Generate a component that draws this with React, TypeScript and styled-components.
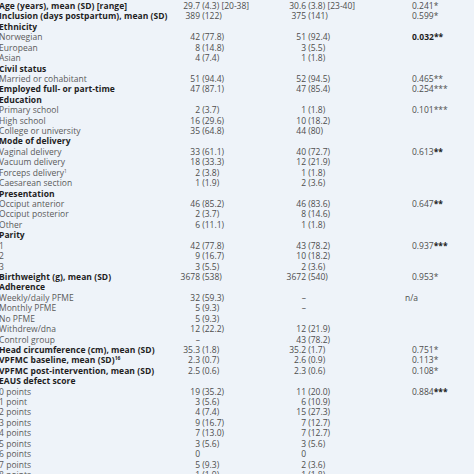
import React from "react";
import styled, { createGlobalStyle } from "styled-components";

const Global = createGlobalStyle`
  html, body { margin: 0; padding: 0; background: #eef3f9; }
  body { font-family: "Open Sans", "Noto Sans", sans-serif; }
`;

const Table = styled.div`
  display: flex;
  flex-direction: column;
  padding-top: 1px;
  width: 474px;
  height: 474px;
  overflow: hidden;
  background: #eef3f9;
  color: #4d4d4d;
  font-size: 8.5px;
`;

const Row = styled.div`
  display: grid;
  grid-template-columns: 176px 106px 130px 1fr;
  height: 10.43px;
  line-height: 10.43px;
  white-space: nowrap;
`;

const Label = styled.div<{ $bold?: boolean }>`
  font-weight: ${(p) => (p.$bold ? 700 : 400)};
  color: ${(p) => (p.$bold ? "#1e1e1e" : "#5a5a5a")};
  margin-left: -1px;
  letter-spacing: 0.05px;
`;

const Cell = styled.div`
  display: flex;
`;

const Num = styled.span`
  display: inline-block;
  width: 24px;
  text-align: right;
`;

const Rest = styled.span`
  white-space: pre;
`;

const PVal = styled.div<{ $bold?: boolean; $shift?: boolean }>`
  font-weight: ${(p) => (p.$bold ? 700 : 400)};
  color: ${(p) => (p.$bold ? "#1e1e1e" : "#4d4d4d")};
  margin-left: ${(p) => (p.$shift ? "-7px" : "0")};
`;

const Stars = styled.span<{ $bold?: boolean }>`
  font-weight: ${(p) => (p.$bold ? 700 : 400)};
  color: ${(p) => (p.$bold ? "#1e1e1e" : "inherit")};
`;

const Sup = styled.sup`
  font-size: 5px;
  line-height: 0;
  vertical-align: 3px;
`;

type R = {
  label: React.ReactNode;
  bold?: boolean;
  a?: string;
  b?: string;
  p?: string;
  stars?: string;
  pBold?: boolean;
  starBold?: boolean;
  shift?: boolean;
};

const rows: R[] = [
  { label: "Age (years), mean (SD) [range]", bold: true, a: "29.7 (4.3) [20-38]", b: "30.6 (3.8) [23-40]", p: "0.241", stars: "*" },
  { label: "Inclusion (days postpartum), mean (SD)", bold: true, a: "389 (122)", b: "375 (141)", p: "0.599", stars: "*" },
  { label: "Ethnicity", bold: true },
  { label: "Norwegian", a: "42 (77.8)", b: "51 (92.4)", p: "0.032", stars: "**", pBold: true, starBold: true },
  { label: "European", a: "8 (14.8)", b: "3 (5.5)" },
  { label: "Asian", a: "4 (7.4)", b: "1 (1.8)" },
  { label: "Civil status", bold: true },
  { label: "Married or cohabitant", a: "51 (94.4)", b: "52 (94.5)", p: "0.465", stars: "**" },
  { label: "Employed full- or part-time", bold: true, a: "47 (87.1)", b: "47 (85.4)", p: "0.254", stars: "***" },
  { label: "Education", bold: true },
  { label: "Primary school", a: "2 (3.7)", b: "1 (1.8)", p: "0.101", stars: "***" },
  { label: "High school", a: "16 (29.6)", b: "10 (18.2)" },
  { label: "College or university", a: "35 (64.8)", b: "44 (80)" },
  { label: "Mode of delivery", bold: true },
  { label: "Vaginal delivery", a: "33 (61.1)", b: "40 (72.7)", p: "0.613", stars: "**", starBold: true },
  { label: "Vacuum delivery", a: "18 (33.3)", b: "12 (21.9)" },
  { label: <>Forceps delivery<Sup>1</Sup></>, a: "2 (3.8)", b: "1 (1.8)" },
  { label: "Caesarean section", a: "1 (1.9)", b: "2 (3.6)" },
  { label: "Presentation", bold: true },
  { label: "Occiput anterior", a: "46 (85.2)", b: "46 (83.6)", p: "0.647", stars: "**", starBold: true },
  { label: "Occiput posterior", a: "2 (3.7)", b: "8 (14.6)" },
  { label: "Other", a: "6 (11.1)", b: "1 (1.8)" },
  { label: "Parity", bold: true },
  { label: "1", a: "42 (77.8)", b: "43 (78.2)", p: "0.937", stars: "***", starBold: true },
  { label: "2", a: "9 (16.7)", b: "10 (18.2)" },
  { label: "3", a: "3 (5.5)", b: "2 (3.6)" },
  { label: "Birthweight (g), mean (SD)", bold: true, a: "3678 (538)", b: "3672 (540)", p: "0.953", stars: "*" },
  { label: "Adherence", bold: true },
  { label: "Weekly/daily PFME", a: "32 (59.3)", b: "–", p: "n/a", shift: true },
  { label: "Monthly PFME", a: "5 (9.3)", b: "–" },
  { label: "No PFME", a: "5 (9.3)" },
  { label: "Withdrew/dna", a: "12 (22.2)", b: "12 (21.9)" },
  { label: "Control group", a: "–", b: "43 (78.2)" },
  { label: "Head circumference (cm), mean (SD)", bold: true, a: "35.3 (1.8)", b: "35.2 (1.7)", p: "0.751", stars: "*" },
  { label: <>VPFMC baseline, mean (SD)<Sup>16</Sup></>, bold: true, a: "2.3 (0.7)", b: "2.6 (0.9)", p: "0.113", stars: "*" },
  { label: "VPFMC post-intervention, mean (SD)", bold: true, a: "2.5 (0.6)", b: "2.3 (0.6)", p: "0.108", stars: "*" },
  { label: "EAUS defect score", bold: true },
  { label: "0 points", a: "19 (35.2)", b: "11 (20.0)", p: "0.884", stars: "***", starBold: true },
  { label: "1 point", a: "3 (5.6)", b: "6 (10.9)" },
  { label: "2 points", a: "4 (7.4)", b: "15 (27.3)" },
  { label: "3 points", a: "9 (16.7)", b: "7 (12.7)" },
  { label: "4 points", a: "7 (13.0)", b: "7 (12.7)" },
  { label: "5 points", a: "3 (5.6)", b: "3 (5.6)" },
  { label: "6 points", a: "0", b: "0" },
  { label: "7 points", a: "5 (9.3)", b: "2 (3.6)" },
  { label: "8 points", a: "1 (1.9)", b: "1 (1.8)" },
];

function Value({ v }: { v?: string }) {
  if (!v) return <Cell />;
  const i = v.indexOf(" ");
  const num = i === -1 ? v : v.slice(0, i);
  const rest = i === -1 ? "" : v.slice(i);
  return (
    <Cell>
      <Num>{num}</Num>
      <Rest>{rest}</Rest>
    </Cell>
  );
}

export default function App() {
  return (
    <>
      <Global />
      <Table>
        {rows.map((r, idx) => (
          <Row key={idx}>
            <Label $bold={r.bold}>{r.label}</Label>
            <Value v={r.a} />
            <Value v={r.b} />
            <PVal $bold={r.pBold} $shift={r.shift}>
              {r.p}
              {r.stars && <Stars $bold={r.starBold}>{r.stars}</Stars>}
            </PVal>
          </Row>
        ))}
      </Table>
    </>
  );
}
